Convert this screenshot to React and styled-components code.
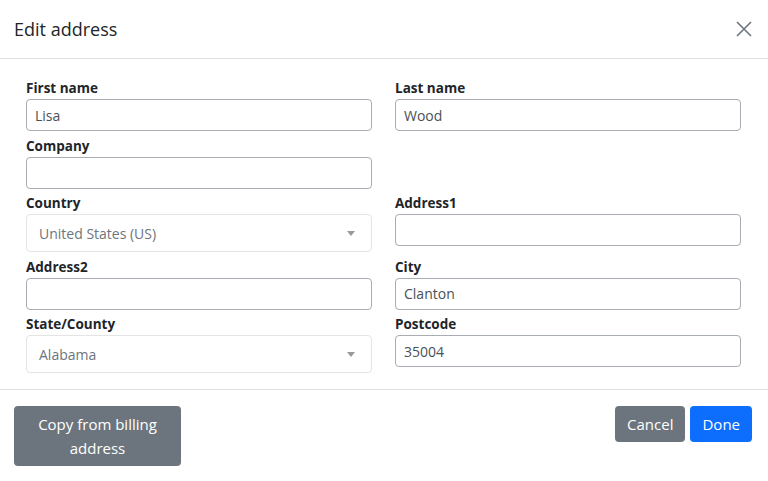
import React from 'react';
import styled, { createGlobalStyle } from 'styled-components';

const GlobalStyle = createGlobalStyle`
  * { box-sizing: border-box; }
  body {
    margin: 0;
    background: #fff;
    font-family: 'Open Sans', 'Noto Sans', sans-serif;
    color: #212529;
  }
`;

const fields = [
  { label: 'First name', value: 'Lisa' },
  { label: 'Last name', value: 'Wood' },
  { label: 'Company', value: '' },
  null,
  { label: 'Country', value: 'United States (US)', select: true },
  { label: 'Address1', value: '' },
  { label: 'Address2', value: '' },
  { label: 'City', value: 'Clanton' },
  { label: 'State/County', value: 'Alabama', select: true },
  { label: 'Postcode', value: '35004' },
];

const App = () => {
  return (
    <Modal>
      <GlobalStyle />
      <Header>
        <Title>Edit address</Title>
        <CloseBtn aria-label="Close">
          <svg width="16" height="16" viewBox="0 0 16 16">
            <path d="M1 1L15 15M15 1L1 15" stroke="#6c757d" strokeWidth="1.6" fill="none" />
          </svg>
        </CloseBtn>
      </Header>
      <Body>
        <Grid>
          {fields.map((f, i) =>
            f ? (
              <Field key={i}>
                <Label>{f.label}</Label>
                {f.select ? (
                  <Select>
                    <span>{f.value}</span>
                    <Caret />
                  </Select>
                ) : (
                  <Input defaultValue={f.value} />
                )}
              </Field>
            ) : (
              <div key={i} />
            )
          )}
        </Grid>
      </Body>
      <Footer>
        <Button $wide>Copy from billing address</Button>
        <Actions>
          <Button>Cancel</Button>
          <Button $primary>Done</Button>
        </Actions>
      </Footer>
    </Modal>
  );
};

export default App;

const Modal = styled.div`
  width: 768px;
  height: 481px;
  background: #fff;
  display: flex;
  flex-direction: column;
`;

const Header = styled.div`
  height: 59px;
  display: flex;
  align-items: center;
  justify-content: space-between;
  padding: 0 16px 0 14px;
  border-bottom: 1px solid #dee2e6;
`;

const Title = styled.h5`
  margin: 0;
  font-size: 18px;
  font-weight: 400;
  line-height: 1.5;
  color: #212529;
`;

const CloseBtn = styled.button`
  border: none;
  background: none;
  padding: 0;
  width: 16px;
  height: 16px;
  display: flex;
  cursor: pointer;
  margin-top: -1px;
`;

const Body = styled.div`
  padding: 18px 27px 16px 26px;
  height: 330px;
`;

const Grid = styled.div`
  display: grid;
  grid-template-columns: 1fr 1fr;
  column-gap: 23px;
  row-gap: 3.5px;
  align-items: start;
`;

const Field = styled.div`
  display: flex;
  flex-direction: column;
`;

const Label = styled.label`
  font-size: 13.5px;
  font-weight: 700;
  line-height: 22px;
  color: #212529;
`;

const Input = styled.input`
  display: block;
  height: 32px;
  width: 100%;
  margin: 0;
  border: 1px solid #a8adb3;
  border-radius: 4px;
  padding: 0 8px;
  font-family: inherit;
  font-size: 14px;
  color: #495057;
  outline: none;
`;

const Select = styled.div`
  height: 38px;
  border: 1px solid #e4e4e4;
  border-radius: 4px;
  display: flex;
  align-items: center;
  justify-content: space-between;
  padding: 0 16px 0 12px;
  font-size: 14px;
  color: #6c757d;
`;

const Caret = styled.span`
  width: 0;
  height: 0;
  border-left: 4px solid transparent;
  border-right: 4px solid transparent;
  border-top: 5px solid #999;
`;

const Footer = styled.div`
  border-top: 1px solid #dee2e6;
  padding: 16px 16px 0 14px;
  display: flex;
  justify-content: space-between;
  align-items: flex-start;
`;

const Actions = styled.div`
  display: flex;
  gap: 5px;
`;

const Button = styled.button`
  border: none;
  border-radius: 4px;
  background: ${(p) => (p.$primary ? '#0d6efd' : '#6c757d')};
  color: #fff;
  font-family: inherit;
  font-size: 15px;
  line-height: 24px;
  padding: 6px 12px;
  width: ${(p) => (p.$wide ? '167px' : 'auto')};
  cursor: pointer;
`;
